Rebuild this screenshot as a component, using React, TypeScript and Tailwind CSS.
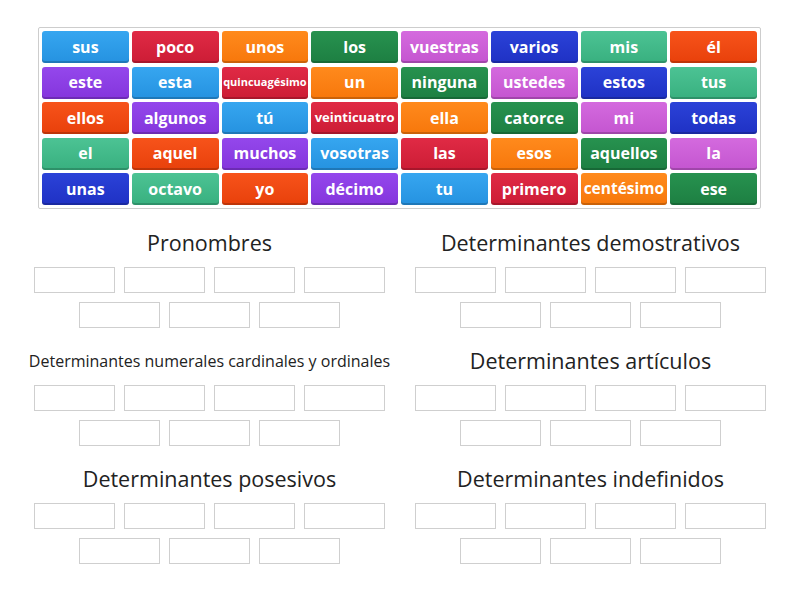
import React from "react";

type Tone = "sky" | "red" | "orange" | "green" | "pink" | "navy" | "mint" | "flame" | "purple";

// full class strings per tile colour (top lighter, bottom darker)
const toneClasses: Record<Tone, string> = {
  sky: "bg-linear-to-b from-[#36a6f0] to-[#2592e0]",
  red: "bg-linear-to-b from-[#e02a45] to-[#cc1c35]",
  orange: "bg-linear-to-b from-[#ff8a1c] to-[#f7770a]",
  green: "bg-linear-to-b from-[#27924f] to-[#1d7f42]",
  pink: "bg-linear-to-b from-[#d46ade] to-[#c455d0]",
  navy: "bg-linear-to-b from-[#2b42d8] to-[#1f31c4]",
  mint: "bg-linear-to-b from-[#4cc394] to-[#38b07f]",
  flame: "bg-linear-to-b from-[#f7531a] to-[#e8400a]",
  purple: "bg-linear-to-b from-[#9447ec] to-[#8435dc]",
};

const tiles: { word: string; tone: Tone; size?: string }[] = [
  { word: "sus", tone: "sky" },
  { word: "poco", tone: "red" },
  { word: "unos", tone: "orange" },
  { word: "los", tone: "green" },
  { word: "vuestras", tone: "pink" },
  { word: "varios", tone: "navy" },
  { word: "mis", tone: "mint" },
  { word: "él", tone: "flame" },

  { word: "este", tone: "purple" },
  { word: "esta", tone: "sky" },
  { word: "quincuagésimo", tone: "red", size: "text-[11px]" },
  { word: "un", tone: "orange" },
  { word: "ninguna", tone: "green" },
  { word: "ustedes", tone: "pink" },
  { word: "estos", tone: "navy" },
  { word: "tus", tone: "mint" },

  { word: "ellos", tone: "flame" },
  { word: "algunos", tone: "purple" },
  { word: "tú", tone: "sky" },
  { word: "veinticuatro", tone: "red", size: "text-[13px]" },
  { word: "ella", tone: "orange" },
  { word: "catorce", tone: "green" },
  { word: "mi", tone: "pink" },
  { word: "todas", tone: "navy" },

  { word: "el", tone: "mint" },
  { word: "aquel", tone: "flame" },
  { word: "muchos", tone: "purple" },
  { word: "vosotras", tone: "sky" },
  { word: "las", tone: "red" },
  { word: "esos", tone: "orange" },
  { word: "aquellos", tone: "green" },
  { word: "la", tone: "pink" },

  { word: "unas", tone: "navy" },
  { word: "octavo", tone: "mint" },
  { word: "yo", tone: "flame" },
  { word: "décimo", tone: "purple" },
  { word: "tu", tone: "sky" },
  { word: "primero", tone: "red" },
  { word: "centésimo", tone: "orange", size: "text-[15.5px]" },
  { word: "ese", tone: "green" },
];

const groups: { title: string; small?: boolean }[] = [
  { title: "Pronombres" },
  { title: "Determinantes demostrativos" },
  { title: "Determinantes numerales cardinales y ordinales", small: true },
  { title: "Determinantes artículos" },
  { title: "Determinantes posesivos" },
  { title: "Determinantes indefinidos" },
];

function Tile({ word, tone, size }: { word: string; tone: Tone; size?: string }) {
  return (
    <div
      className={`${toneClasses[tone]} h-[32px] pb-[1px] rounded-[3px] flex items-center justify-center text-white font-bold whitespace-nowrap shadow-[inset_0_-2px_0_rgba(0,0,0,0.18)] ${
        size ?? "text-[16px]"
      }`}
    >
      {word}
    </div>
  );
}

function Group({ title, small }: { title: string; small?: boolean }) {
  return (
    <div className="h-[118px] flex flex-col items-center">
      <div
        className={`h-[36px] flex items-center justify-center text-[#222] whitespace-nowrap ${
          small ? "text-[16px]" : "text-[21.5px]"
        }`}
      >
        {title}
      </div>
      <div className="mt-[6px] w-[354px] flex flex-wrap justify-center gap-x-[9px] gap-y-[9px]">
        {Array.from({ length: 7 }).map((_, i) => (
          <div key={i} className="w-[81px] h-[26px] border border-[#cfcfcf] bg-white" />
        ))}
      </div>
    </div>
  );
}

export default function App() {
  return (
    <div className="w-[800px] h-[600px] bg-white overflow-hidden font-['Open_Sans',sans-serif]">
      {/* word tray */}
      <div className="pt-[27px] pl-[38px]">
        <div className="w-[723px] h-[182px] border border-[#cdcdcd] rounded-[2px] p-[3px] grid grid-cols-8 gap-x-[3px] gap-y-[3.5px]">
          {tiles.map((t) => (
            <Tile key={t.word} {...t} />
          ))}
        </div>
      </div>

      {/* drop groups */}
      <div className="mt-[16px] px-[19px] grid grid-cols-2">
        {groups.map((g) => (
          <Group key={g.title} {...g} />
        ))}
      </div>
    </div>
  );
}
